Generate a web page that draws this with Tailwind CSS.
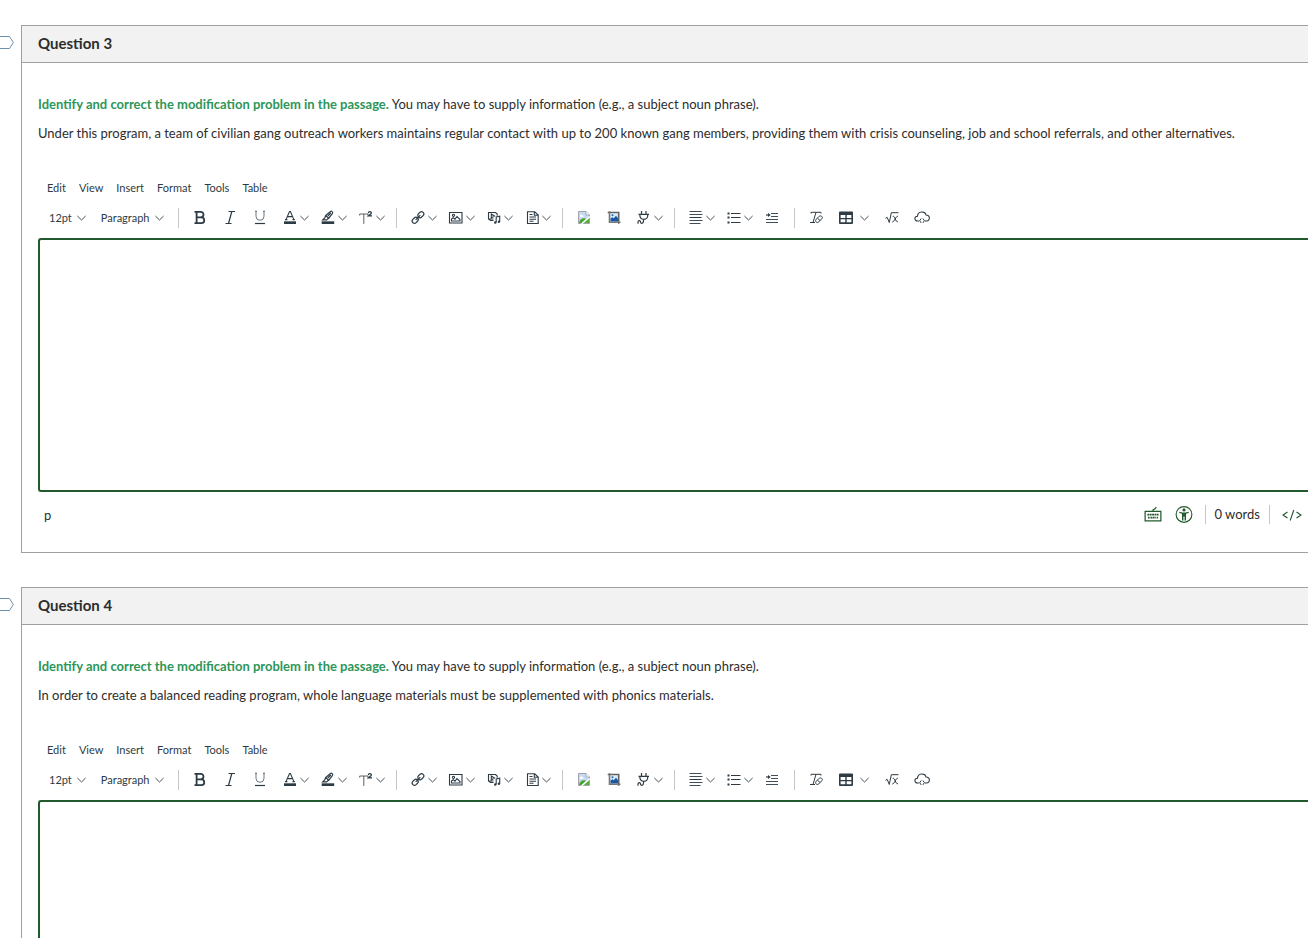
<!DOCTYPE html>
<html lang="en">
<head>
    <meta charset="UTF-8">
    <meta name="viewport" content="width=device-width, initial-scale=1.0">
    <title>Quiz</title>
    <script src="https://cdn.jsdelivr.net/npm/@tailwindcss/browser@4"></script>
</head>
<body class="bg-white font-['Lato',sans-serif] text-[#2d3b45] overflow-x-hidden">
    <!-- Shared toolbar icons -->
    <svg class="hidden" aria-hidden="true">
        <symbol id="i-chevron" viewBox="0 0 9 8"><path d="M.4 2 4.500 6l4.100-4" fill="none" stroke="currentColor" stroke-width=".9"/></symbol>
        <symbol id="i-bold" viewBox="0 0 16 16"><path d="M2.500 1.900h6.300a2.700 2.700 0 0 1 0 5.400H4.800M4.800 7.300h4.500a2.900 2.900 0 0 1 0 5.900H2.500M4.600 1.900v11.300" fill="none" stroke="currentColor" stroke-width="1.800"/></symbol>
        <symbol id="i-italic" viewBox="0 0 16 16"><path d="M6.500 1.500h6.500M3.500 13.500H9.500M9.800 1.500l-3.300 12" fill="none" stroke="currentColor" stroke-width="1.200"/></symbol>
        <symbol id="i-underline" viewBox="0 0 16 16"><path d="M4 1.200v5.100a3.900 3.900 0 0 0 8 0V1.200M3 1.200h2M11 1.200h2" fill="none" stroke="currentColor" stroke-width=".7"/><path d="M3 13.500h10" stroke="currentColor" stroke-width="1.200"/></symbol>
        <symbol id="i-color" viewBox="0 0 16 16"><path d="M4 9.600 7.500 1.500h.9l3.500 8.100M5.300 6.600h5.300M3 9.600h2.400M10.500 9.600h2.400" fill="none" stroke="currentColor" stroke-width="1.100"/><path d="M2 11.300h12V14H2z" fill="currentColor"/></symbol>
        <symbol id="i-highlight" viewBox="0 0 16 16"><path d="M5.700 5.500 10.500 1.500c1.100-.8 2.700.5 2 1.800L8.700 8.300zM5.700 5.500l3 2.800M5.700 5.500 4.700 7.900l-2 2h4l1.500-1.500M7.800 6l3-3" fill="none" stroke="currentColor" stroke-width="1.200"/><path d="M1.700 11.300h12.500V14H1.700z" fill="currentColor"/></symbol>
        <symbol id="i-super" viewBox="0 0 16 16"><path d="M1.700 5.500V4h8.300v1.500M5.800 4v9.900" fill="none" stroke="currentColor" stroke-width=".8"/><path d="M10.300 3.100c.1-2 3.200-1.900 3 0-.1 1-1.700 1.600-3 2.800h3.700" fill="none" stroke="currentColor" stroke-width="1.300"/></symbol>
        <symbol id="i-link" viewBox="0 0 16 16"><g fill="none" stroke="currentColor" stroke-width="1.200"><rect x="7.500" y="2.400" width="6.600" height="4.600" rx="2.300" transform="rotate(-45 10.800 4.700)"/><rect x="1.900" y="8" width="6.600" height="4.600" rx="2.300" transform="rotate(-45 5.200 10.300)"/><path d="m5.700 9.800 4.600-4.600"/></g></symbol>
        <symbol id="i-image" viewBox="0 0 16 16"><g fill="none" stroke="currentColor" stroke-width="1.100"><path d="M1.500 2.500h12.500v10.500H1.500z"/><path d="M3.500 11V9l1.700-1.200L7 9.200 9 6.500l3 3V11z"/><circle cx="5.500" cy="5.300" r="1.100"/></g></symbol>
        <symbol id="i-media" viewBox="0 0 16 16"><g fill="none" stroke="currentColor" stroke-width="1.100"><path d="M7.500 10.500H4.500L2.500 9V2.500H9.500l1.700 1.500v1.700M2.500 9h5"/><path d="M5.300 4v4L8.500 6z"/><path d="M10.200 12V6.900l3.500-.7v5.500"/></g><circle cx="9.300" cy="12.500" r="1.300" fill="currentColor"/><circle cx="12.900" cy="11.800" r="1.200" fill="currentColor"/></symbol>
        <symbol id="i-doc" viewBox="0 0 16 16"><path d="M3.500 1.800h7.200l3.500 3.200v8.500H3.500zM10.300 1.800v3.500h3.900M5.500 4.500h3M5.500 7h6.500M5.500 9.200h6.500M5.500 11.300h4" fill="none" stroke="currentColor" stroke-width="1.100"/></symbol>
        <symbol id="i-broken" viewBox="0 0 16 16"><path d="M2.500 1.500h7.500l3.500 3.500v8.500h-11z" fill="#c5daf5" stroke="#9a9ca1" stroke-width=".9"/><path d="M10 1.500v3.500h3.500" fill="#fff" stroke="#9a9ca1" stroke-width=".8"/><path d="M4 6c0-1.700 2.300-1.900 2.600-.6 1.200-.2 1.400 1.400.4 1.500H4.300z" fill="#fff"/><path d="M3 13c.3-3.900 4-5.400 7-4.300L5.700 13z" fill="#48a62d"/><path d="m7.500 13.100 5.500-4.800v4.700z" fill="#56ae35"/><path d="M5.500 14 14 6.500" stroke="#fff" stroke-width="1.200"/></symbol>
        <symbol id="i-crop" viewBox="0 0 16 16"><path d="M4 3.500h8.500V12H4z" fill="#dcecfb"/><path d="M4.500 11.500V8.500l1.800-1.200 1.400 1L10 5.700l2 2.600v3.200z" fill="#1558a8"/><circle cx="6.500" cy="5.300" r="1" fill="#1d66b8"/><path d="M1.700 2.500h11v11.300" fill="none" stroke="#626262" stroke-width="1.600"/><path d="M3.500 1.200v11h11" fill="none" stroke="#777" stroke-width="1.600"/></symbol>
        <symbol id="i-plug" viewBox="0 0 16 16"><path d="M5.500 1v3M10 1v3M2.500 4.300H13M3.800 4.600c0 3.800 1.700 4.800 4 4.800s4-1 4-4.800M7.500 9.400v1.700c0 2.900-2.900 2.700-3 .8-.1-1.700-2.200-1.700-2.500 0v1.800" fill="none" stroke="currentColor" stroke-width="1.200"/></symbol>
        <symbol id="i-align" viewBox="0 0 16 16"><path d="M1.500 1.500h12M1.500 4.500h13M1.500 10.500h13M1.500 13.500h11" stroke="currentColor" stroke-width=".9"/><path d="M1.500 7.500h12" stroke="currentColor" stroke-width="1"/></symbol>
        <symbol id="i-list" viewBox="0 0 16 16"><path d="M5 3.500h9.500M5 7.500h9.500M5 12.500h9.500" stroke="currentColor" stroke-width="1"/><path d="M1.500 2.500h2v2h-2zM1.500 6.500h2v2h-2zM1.500 11.500h2v2h-2z" fill="currentColor"/></symbol>
        <symbol id="i-indent" viewBox="0 0 16 16"><path d="M7 3.500h7M7 6.500h7M2 9.500h12M2 12.500h12" stroke="currentColor" stroke-width=".9"/><path d="M2 5h3" stroke="currentColor" stroke-width="1.200"/><path d="m4 3 2.700 2L4 7z" fill="currentColor"/></symbol>
        <symbol id="i-clear" viewBox="0 0 16 16"><path d="M3 3.500V2.300h10v1.200M8 2.300 5 12.500M2 12.500h5M8.500 9 11.200 6.300c1.400-1.200 4.200.5 2.700 2.300l-3 3.200c-1.500 1.600-5-.1-2.400-2.800zM9.500 8.200l2.600 2.400" fill="none" stroke="currentColor" stroke-width="1"/></symbol>
        <symbol id="i-table" viewBox="0 0 16 16"><path d="M2 1.500h12a1 1 0 0 1 1 1v10.500a1 1 0 0 1-1 1H2a1 1 0 0 1-1-1V2.500a1 1 0 0 1 1-1zm.6 3.500v3h4.700V5zm6.100 0v3h4.700V5zM2.600 9.300v3h4.700v-3zm6.100 0v3h4.700v-3z" fill="currentColor" fill-rule="evenodd"/></symbol>
        <symbol id="i-sqrt" viewBox="0 0 16 16"><path d="m1.500 8.200 1.700-.8L5.300 12.500 7.300 2.700H14.500M8.700 6.400c2.500-1 2.500 6 5.300 5.400M13.900 6.200c-2.400-.3-3.200 6-5.700 5.800" fill="none" stroke="currentColor" stroke-width="1"/></symbol>
        <symbol id="i-cloud" viewBox="0 0 16 16"><path d="M5 11H3.600C-.1 11 .1 6.200 3.500 6.200 3.700 1.200 11.100.6 12 5c4.600.2 4.200 6 .6 6H11" fill="none" stroke="currentColor" stroke-width="1.100"/><path d="M7.200 8.500 5.700 10.700 7.200 12.900M8.900 8.500l1.500 2.200-1.500 2.200" fill="none" stroke="currentColor" stroke-width="1"/></symbol>
        <symbol id="i-keyboard" viewBox="0 0 16 16"><path d="M1 4.800h14V13.200H1zM8 4.800V3.400l1.500-.7L11 1" fill="none" stroke="currentColor" stroke-width="1.100"/><path d="M3 7.700h10M3.500 10.300h1.500M5.700 10.300h4.800M11.200 10.300h1.300" stroke="currentColor" stroke-width="1.700" stroke-dasharray="1.700 .4"/></symbol>
        <symbol id="i-a11y" viewBox="0 0 16 16"><circle cx="8" cy="7.500" r="7" fill="none" stroke="currentColor" stroke-width="1"/><circle cx="8" cy="3.500" r="1.400" fill="currentColor"/><path d="M3.800 5.200 6.500 5.700h3l2.700-.5v1L9.800 6.900v5.900H8.500V9.400h-1v3.400H6.200V6.900L3.800 6.200z" fill="currentColor"/></symbol>
        <symbol id="i-code" viewBox="0 0 20 16"><path d="M5.500 5 1 8l4.500 3M14.500 5 19 8l-4.500 3M11.800 3 8.200 13.500" fill="none" stroke="currentColor" stroke-width="1.100"/></symbol>
    </svg>

    <main id="questions" class="pt-[25px] flex flex-col gap-[34px]"></main>

    <script>
        const questions = [
            { number: 3, text: 'Under this program, a team of civilian gang outreach workers maintains regular contact with up to 200 known gang members, providing them with crisis counseling, job and school referrals, and other alternatives.' },
            { number: 4, text: 'In order to create a balanced reading program, whole language materials must be supplemented with phonics materials.' }
        ];

        const menus = ['Edit', 'View', 'Insert', 'Format', 'Tools', 'Table'];

        // [icon, label, has a drop-down]
        const groups = [
            [['bold', 'Bold'], ['italic', 'Italic'], ['underline', 'Underline'], ['color', 'Text color', true], ['highlight', 'Background color', true], ['super', 'Superscript', true]],
            [['link', 'Links', true], ['image', 'Images', true], ['media', 'Record/Upload media', true], ['doc', 'Documents', true]],
            [['broken', 'External tool'], ['crop', 'Embed image'], ['plug', 'Apps', true]],
            [['align', 'Align', true], ['list', 'Lists', true], ['indent', 'Increase indent']],
            [['clear', 'Clear formatting'], ['table', 'Table', true], ['sqrt', 'Insert math equation'], ['cloud', 'Embed']]
        ];

        function icon(name, size = 'size-4') {
            return `<svg class="${size} shrink-0" aria-hidden="true"><use href="#i-${name}"/></svg>`;
        }

        function toolButton([name, label, menu]) {
            if (!menu) {
                return `<button type="button" aria-label="${label}" class="w-[30px] h-7 flex items-center justify-center">${icon(name)}</button>`;
            }
            const width = name === 'table' ? 'w-[46px] gap-[6px]' : 'w-[38px] gap-[2px]';
            return `<button type="button" aria-label="${label}" class="${width} h-7 pl-[7px] flex items-center">${icon(name)}${icon('chevron', 'w-[9px] h-2')}</button>`;
        }

        function renderQuestion(q) {
            return `
                <div class="flex">
                    <button type="button" aria-label="Flag question ${q.number}" class="w-[21px] h-[34px] shrink-0 flex items-center">
                        <svg class="w-[15px] h-[14px]" viewBox="0 0 15 14" aria-hidden="true"><path d="M-1 1.500H9.500L13.300 7.500 9.500 13.500H-1" fill="none" stroke="#6c92b2" stroke-width="1"/></svg>
                    </button>
                    <section class="flex-1 min-w-0 border border-r-0 border-[#a0a0a0]">
                        <h2 class="h-[37px] pl-4 pb-px flex items-center bg-[#f2f2f2] border-b border-[#a0a0a0] text-[15px] font-bold text-[#2d2d2d]">Question ${q.number}</h2>
                        <div class="pl-4 pt-[31px] pb-[27px]">
                            <div class="text-[13px] leading-5 text-[#2d2d2d] flex flex-col gap-[9px]">
                                <p><strong class="text-[#2d9659]">Identify and correct the modification problem in the passage.</strong> You may have to supply information (e.g., a subject noun phrase).</p>
                                <p>${q.text}</p>
                            </div>
                            <div class="mt-[35px] pl-[9px] h-5 flex items-center gap-[13px] text-[11px]">
                                ${menus.map(m => `<button type="button">${m}</button>`).join('')}
                            </div>
                            <div class="h-10 flex items-center text-[11px]">
                                <button type="button" aria-label="Font size" class="pl-[11px] flex items-center gap-[5px]">12pt ${icon('chevron', 'w-[9px] h-2')}</button>
                                <button type="button" aria-label="Blocks" class="pl-[15px] pr-[14px] flex items-center gap-[5px]">Paragraph ${icon('chevron', 'w-[9px] h-2')}</button>
                                ${groups.map(g => `<div class="flex items-center relative px-[7px]"><span class="absolute left-0 h-5 w-px bg-[#c3c7ca]"></span>${g.map(toolButton).join('')}</div>`).join('')}
                            </div>
                            <textarea aria-label="Answer to question ${q.number}" class="block w-full h-[254px] p-2 resize-none outline-none border-2 border-r-0 border-[#225a2e] rounded-l-[3px] text-base"></textarea>
                            <div class="h-[33px] pt-3 pl-[6px] pr-[6px] flex items-center text-[13px] text-[#2d2d2d]">
                                <span class="leading-5">p</span>
                                <div class="ml-auto h-5 flex items-center text-[#225a2e]">
                                    <button type="button" aria-label="Keyboard shortcuts">${icon('keyboard', 'size-[18px]')}</button>
                                    <button type="button" aria-label="Accessibility checker" class="ml-[13px] mr-3">${icon('a11y', 'size-[18px]')}</button>
                                    <span class="h-[19px] px-[9px] border-x border-[#c3c7ca] flex items-center text-[#2d2d2d]">0 words</span>
                                    <button type="button" aria-label="Switch to HTML editor" class="ml-3">${icon('code', 'w-5 h-4')}</button>
                                </div>
                            </div>
                        </div>
                    </section>
                </div>
            `;
        }

        document.getElementById('questions').innerHTML = questions.map(renderQuestion).join('');
    </script>
</body>
</html>
